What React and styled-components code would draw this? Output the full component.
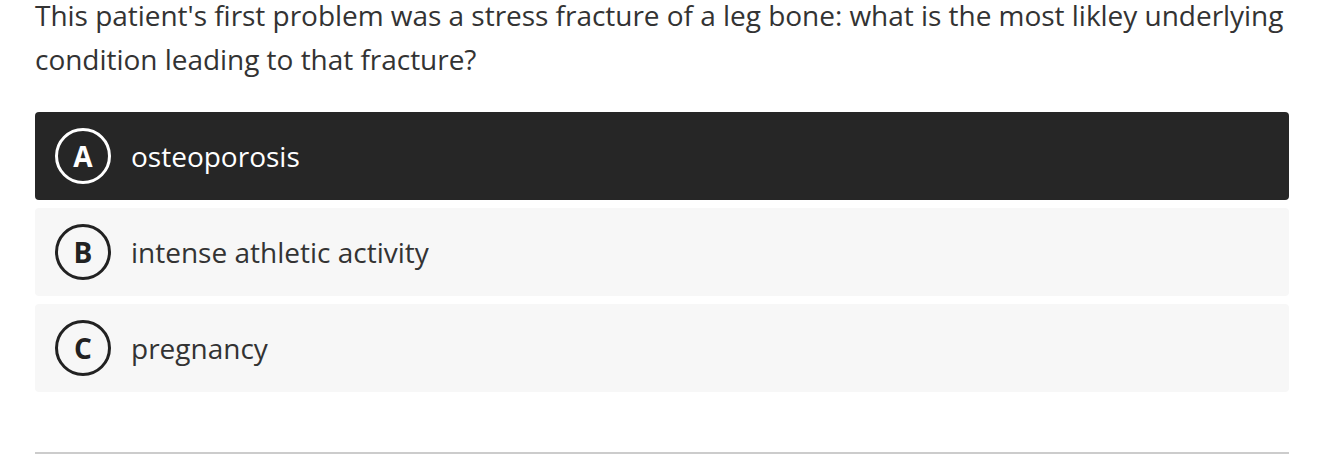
import React from "react";
import styled, { createGlobalStyle } from "styled-components";

const GlobalStyle = createGlobalStyle`
  body {
    margin: 0;
    background: #fff;
    font-family: "Open Sans", "Noto Sans", sans-serif;
    color: #333;
  }
`;

const Page = styled.div`
  padding: 0 42px 0 35px;
`;

const Question = styled.p`
  margin: -7px 0 0;
  font-size: 28px;
  line-height: 44px;
  color: #333;
  letter-spacing: -0.03px;
`;

const Options = styled.div`
  display: flex;
  flex-direction: column;
  gap: 8px;
  margin-top: 31px;
`;

const Option = styled.div`
  display: flex;
  align-items: center;
  gap: 20px;
  height: 88px;
  box-sizing: border-box;
  padding: 0 20px;
  border-radius: 4px;
  background: ${(p) => (p.$selected ? "#262626" : "#f7f7f7")};
  color: ${(p) => (p.$selected ? "#fff" : "#333")};
  cursor: pointer;
`;

const Letter = styled.span`
  width: 56px;
  height: 56px;
  box-sizing: border-box;
  border-radius: 50%;
  border: 3.5px solid ${(p) => (p.$selected ? "#fff" : "#222")};
  color: ${(p) => (p.$selected ? "#fff" : "#222")};
  display: flex;
  align-items: center;
  justify-content: center;
  font-size: 28px;
  font-weight: 700;
  flex-shrink: 0;
`;

const Label = styled.span`
  font-size: 28px;
`;

const Divider = styled.hr`
  margin: 60px 0 0;
  border: none;
  height: 2px;
  background: #cccccc;
`;

const options = [
  { letter: "A", text: "osteoporosis", selected: true },
  { letter: "B", text: "intense athletic activity" },
  { letter: "C", text: "pregnancy" },
];

const App = () => {
  return (
    <Page>
      <GlobalStyle />
      <Question>
        This patient's first problem was a stress fracture of a leg bone: what is the most likley underlying condition leading to that fracture?
      </Question>
      <Options>
        {options.map((o) => (
          <Option key={o.letter} $selected={o.selected}>
            <Letter $selected={o.selected}>{o.letter}</Letter>
            <Label>{o.text}</Label>
          </Option>
        ))}
      </Options>
      <Divider />
    </Page>
  );
};

export default App;
